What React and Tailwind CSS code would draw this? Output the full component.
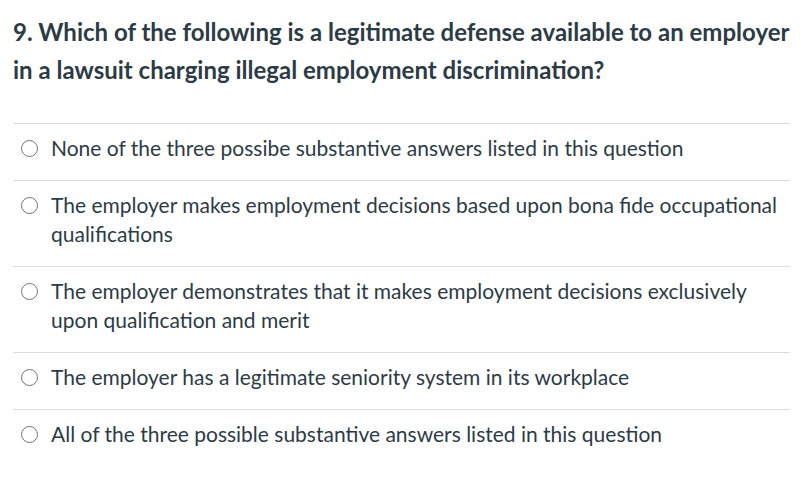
const options = [
  'None of the three possibe substantive answers listed in this question',
  'The employer makes employment decisions based upon bona fide occupational qualifications',
  'The employer demonstrates that it makes employment decisions exclusively upon qualification and merit',
  'The employer has a legitimate seniority system in its workplace',
  'All of the three possible substantive answers listed in this question',
];

export default function App() {
  return (
    <div className="w-[802px] h-[478px] bg-white text-[#2d3b45] font-['Lato','Liberation_Sans',sans-serif]">
      <div className="pl-[13px] pr-[12px] pt-[13px]">
        <h2 className="text-[24px] font-bold leading-[38px]">
          9. Which of the following is a legitimate defense available to an employer in a lawsuit charging illegal employment discrimination?
        </h2>
        <div className="mt-[34px]">
          {options.map((o, i) => (
            <label key={i} className="flex border-t border-[#dcdcdc] pt-[9px] pb-[18px]">
              <span className="w-[38px] shrink-0 flex pt-[7px] pl-[8px]">
                <span className="w-[17px] h-[17px] rounded-full border-[1.5px] border-[#6f7378]" />
              </span>
              <span className="text-[21px] leading-[29px]">{o}</span>
            </label>
          ))}
        </div>
      </div>
    </div>
  );
}
